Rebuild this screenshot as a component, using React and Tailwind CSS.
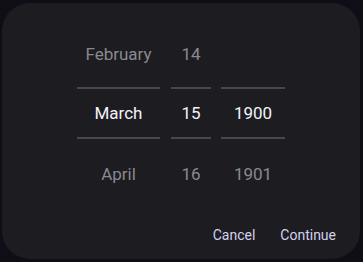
import React from 'react';

const months = ['February', 'March', 'April'];
const days = ['14', '15', '16'];
const years = ['', '1900', '1901'];

function Column({ items, width }) {
    return (
        <div className="flex flex-col" style={{ width }}>
            <div className="h-[48px] pt-[2px] flex items-center justify-center text-[#8a898f]">{items[0]}</div>
            <div className="mt-[9px] h-[2px] bg-[#48474d]" />
            <div className="h-[48px] pt-[2px] flex items-center justify-center text-[#f4f2f7]">{items[1]}</div>
            <div className="h-[2px] bg-[#48474d]" />
            <div className="mt-[11px] h-[48px] pt-[2px] flex items-center justify-center text-[#8a898f]">{items[2]}</div>
        </div>
    );
}

export default function App() {
    return (
        <div className="w-[363px] h-[262px] bg-[#0f0d16] pt-[3px] pl-[2px]" style={{ fontFamily: 'Roboto, "Noto Sans", sans-serif' }}>
            <div className="w-[358px] h-[256px] bg-[#1d1c21] rounded-[28px] flex flex-col">
                {/* ピッカー部分 */}
                <div className="pt-[27px] pl-[75px] flex text-[17px]">
                    <Column items={months} width={83} />
                    <div className="ml-[11px]">
                        <Column items={days} width={40} />
                    </div>
                    <div className="ml-[10px]">
                        <Column items={years} width={64} />
                    </div>
                </div>

                {/* ボタン */}
                <div className="mt-[27px] flex justify-end gap-[25px] pr-[24px] text-[14px] text-[#d4d1ee] leading-[20px]">
                    <span>Cancel</span>
                    <span>Continue</span>
                </div>
            </div>
        </div>
    );
}
